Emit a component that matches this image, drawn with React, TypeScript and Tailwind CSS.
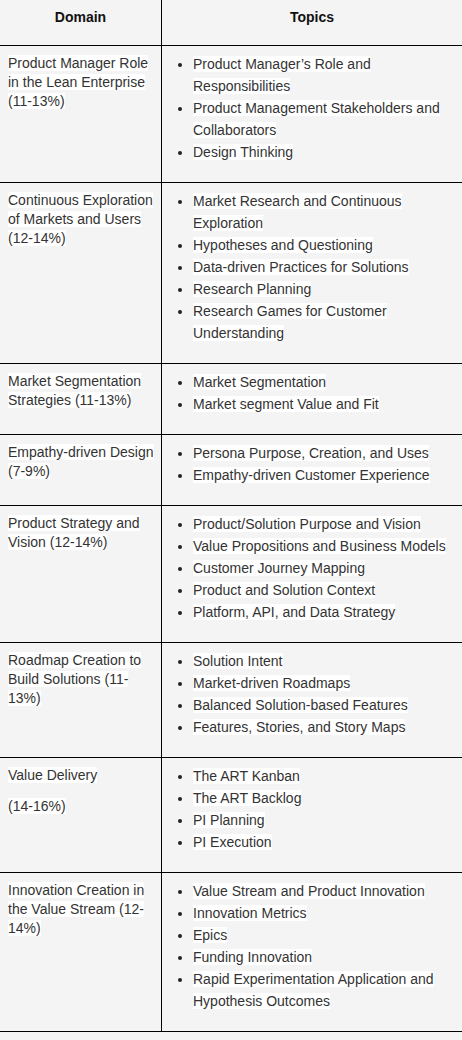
const rows: { domain: string[]; topics: string[] }[] = [
  {
    domain: ["Product Manager Role in the Lean Enterprise (11-13%)"],
    topics: [
      "Product Manager’s Role and Responsibilities",
      "Product Management Stakeholders and Collaborators",
      "Design Thinking",
    ],
  },
  {
    domain: ["Continuous Exploration of Markets and Users (12-14%)"],
    topics: [
      "Market Research and Continuous Exploration",
      "Hypotheses and Questioning",
      "Data-driven Practices for Solutions",
      "Research Planning",
      "Research Games for Customer Understanding",
    ],
  },
  {
    domain: ["Market Segmentation Strategies (11-13%)"],
    topics: ["Market Segmentation", "Market segment Value and Fit"],
  },
  {
    domain: ["Empathy-driven Design (7-9%)"],
    topics: ["Persona Purpose, Creation, and Uses", "Empathy-driven Customer Experience"],
  },
  {
    domain: ["Product Strategy and Vision (12-14%)"],
    topics: [
      "Product/Solution Purpose and Vision",
      "Value Propositions and Business Models",
      "Customer Journey Mapping",
      "Product and Solution Context",
      "Platform, API, and Data Strategy",
    ],
  },
  {
    domain: ["Roadmap Creation to Build Solutions (11-13%)"],
    topics: [
      "Solution Intent",
      "Market-driven Roadmaps",
      "Balanced Solution-based Features",
      "Features, Stories, and Story Maps",
    ],
  },
  {
    domain: ["Value Delivery", "(14-16%)"],
    topics: ["The ART Kanban", "The ART Backlog", "PI Planning", "PI Execution"],
  },
  {
    domain: ["Innovation Creation in the Value Stream (12-14%)"],
    topics: [
      "Value Stream and Product Innovation",
      "Innovation Metrics",
      "Epics",
      "Funding Innovation",
      "Rapid Experimentation Application and Hypothesis Outcomes",
    ],
  },
];

const App = () => {
  return (
    <div className="min-h-[1040px] w-[462px] bg-[#f4f4f4] font-['Liberation_Sans',Arial,sans-serif] text-[14px] text-[#333333]">
      {/* Header */}
      <div className="grid grid-cols-[162px_1fr] border-b border-black">
        <div className="h-[45px] border-r border-black pt-[8px] text-center font-bold leading-[19px] text-[#111]">
          Domain
        </div>
        <div className="h-[45px] pt-[8px] text-center font-bold leading-[19px] text-[#111]">Topics</div>
      </div>

      {rows.map((row, i) => (
        <div key={i} className="grid grid-cols-[162px_1fr] border-b border-black">
          <div className="flex flex-col gap-[12px] border-r border-black pt-[8px] pr-[4px] pl-[8px] leading-[19px]">
            {row.domain.map((d) => (
              <p key={d}>
                <span className="bg-white">{d}</span>
              </p>
            ))}
          </div>
          <div className="pt-[7px] pr-[8px] pb-[19px]">
            <ul className="list-disc pl-[31px] leading-[22px] marker:text-[#222]">
              {row.topics.map((t) => (
                <li key={t}>
                  <span className="bg-white">{t}</span>
                </li>
              ))}
            </ul>
          </div>
        </div>
      ))}
    </div>
  );
};

export default App;
